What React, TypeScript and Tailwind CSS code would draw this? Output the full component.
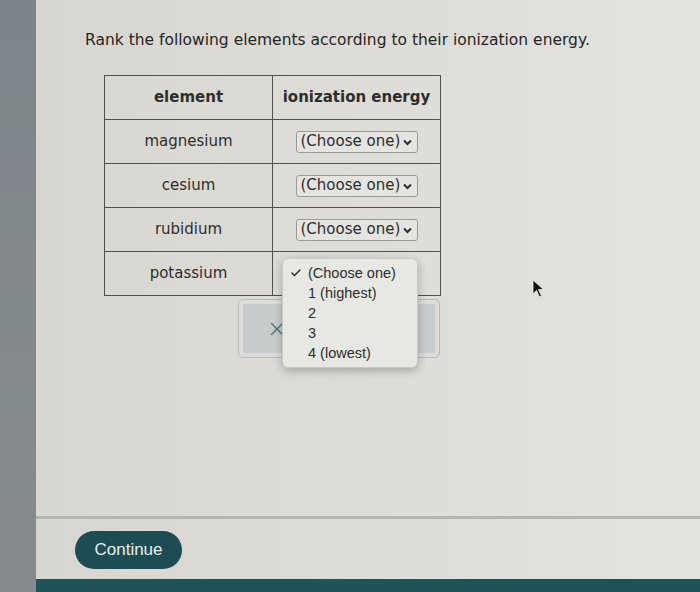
import { Check, X } from "lucide-react";

const rows = ["magnesium", "cesium", "rubidium", "potassium"];
const options = ["(Choose one)", "1 (highest)", "2", "3", "4 (lowest)"];

const ChooseSelect = () => (
  <div className="inline-flex h-[22px] w-[122px] items-center justify-between rounded-[3px] border border-[#9a9b98] bg-[#e4e4e0] pl-[4px] pr-[5px] text-[15px] leading-none text-[#2e2e2e]">
    <span>(Choose one)</span>
    <svg width="9" height="7" viewBox="0 0 9 7" className="mt-[2px]">
      <path d="M1 1.5 L4.5 5 L8 1.5" fill="none" stroke="#2e2e2e" strokeWidth="2" />
    </svg>
  </div>
);

const App = () => {
  return (
    <div
      className="relative flex h-[592px] w-[700px] overflow-hidden bg-[#7d8489]"
      style={{ fontFamily: '"DejaVu Sans", Verdana, sans-serif' }}
    >
      <div className="w-[36px] shrink-0 bg-gradient-to-b from-[#7e858a] to-[#858b8e]" />

      <div className="flex flex-1 flex-col bg-gradient-to-r from-[#d8d6d0] via-[#dddcd7] to-[#e3e3e0]">
        <div className="flex-1 pl-[49px] pt-[29px]">
          <h1 className="text-[15.5px] leading-[22px] text-[#262626]">
            Rank the following elements according to their ionization energy.
          </h1>

          <table className="ml-[19px] mt-[24px] border-collapse text-[15px] text-[#2e2e2e]">
            <thead>
              <tr>
                <th className="h-[44px] w-[168px] border border-[#4f4f4f] font-bold">element</th>
                <th className="h-[44px] w-[168px] border border-[#4f4f4f] font-bold">ionization energy</th>
              </tr>
            </thead>
            <tbody>
              {rows.map((name, i) => (
                <tr key={name}>
                  <td className="h-[44px] border border-[#4f4f4f] text-center">{name}</td>
                  <td className="h-[44px] border border-[#4f4f4f] text-center">
                    {i < 3 ? <ChooseSelect /> : null}
                  </td>
                </tr>
              ))}
            </tbody>
          </table>

          <div className="ml-[153px] mt-[3px] h-[59px] w-[202px] rounded-[5px] border border-[#b9bbb9] bg-[#dcdcda] p-[4px]">
            <div className="flex h-full items-center rounded-[3px] bg-[#c9cccc] pl-[23px]">
              <X size={22} strokeWidth={1.5} className="text-[#4e6c77]" />
            </div>
          </div>
        </div>

        <div className="h-[3px] bg-[#b3b5b2]" />

        <div className="h-[60px] pl-[39px] pt-[12px]">
          <button
            className="h-[38px] w-[107px] rounded-full bg-[#1d4c54] text-[17px] text-[#e6eeee]"
            style={{ fontFamily: '"Liberation Sans", Arial, sans-serif' }}
          >
            Continue
          </button>
        </div>

        <div className="h-[13px] bg-[#1f5359]" />
      </div>

      {/* open select menu */}
      <div
        className="absolute left-[282px] top-[258px] w-[136px] rounded-[6px] border border-[#c8c8c4] bg-[#e7e7e3] py-[4px] text-[14.5px] leading-[20px] text-[#2e2e2e] shadow-[0_3px_10px_rgba(0,0,0,0.25)]"
        style={{ fontFamily: '"Liberation Sans", Arial, sans-serif' }}
      >
        {options.map((opt, i) => (
          <div key={opt} className="flex items-center">
            <span className="flex w-[25px] justify-end pr-[6px]">
              {i === 0 ? <Check size={12} strokeWidth={3} /> : null}
            </span>
            <span>{opt}</span>
          </div>
        ))}
      </div>

      {/* mouse pointer */}
      <svg className="absolute left-[531px] top-[279px]" width="14" height="20" viewBox="0 0 14 20">
        <path d="M2 1 L2 15 L5.5 11.5 L8.5 18 L10.5 17 L7.5 10.5 L12.5 10.5 Z" fill="#111" stroke="#eee" strokeWidth="0.8" />
      </svg>
    </div>
  );
};

export default App;
